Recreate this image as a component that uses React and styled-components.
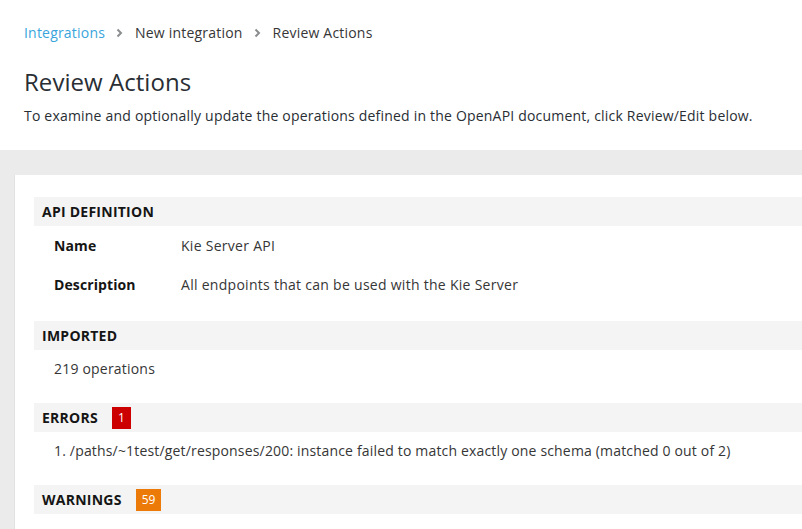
import React from 'react';
import styled, { createGlobalStyle } from 'styled-components';

const GlobalStyle = createGlobalStyle`
  html, body {
    margin: 0;
    padding: 0;
    background: #ebebeb;
    overflow: hidden;
  }
  body {
    font-family: "Open Sans", "Liberation Sans", sans-serif;
    font-size: 14px;
    letter-spacing: 0.2px;
    color: #363636;
  }
`;

const Page = styled.div`
  height: 529px;
  overflow: hidden;
  display: flex;
  flex-direction: column;
`;

const Header = styled.header`
  background: #fff;
  padding: 20px 24px 24px;
`;

const Breadcrumb = styled.nav`
  display: flex;
  align-items: center;
  line-height: 26px;
  font-size: 14px;
`;

const Crumb = styled.span`
  color: ${(p) => (p.link ? '#39a5dc' : '#363636')};
`;

const Sep = styled.span`
  display: inline-flex;
  align-items: center;
  margin: 0 12px 0 11px;
  color: #8b8d8f;
`;

const Title = styled.h1`
  margin: 21px 0 0;
  font-size: 24px;
  font-weight: 400;
  letter-spacing: 0.05px;
  line-height: 30px;
  color: #292e34;
`;

const Lead = styled.p`
  margin: 9px 0 0;
  line-height: 20px;
  color: #292e34;
`;

const Body = styled.main`
  flex: 1;
  background: #ebebeb;
  padding: 25px 0 0 14px;
`;

const Card = styled.div`
  background: #fff;
  border-left: 1px solid #e2e2e2;
  min-width: 820px;
  height: 100%;
  padding: 22px 0 0 19px;
`;

const SectionHead = styled.div`
  display: flex;
  align-items: center;
  height: 29px;
  padding: 0 8px;
  background: #f4f4f4;
  font-weight: 700;
  letter-spacing: 0.25px;
  text-transform: uppercase;
  color: #151515;
`;

const Badge = styled.span`
  display: inline-flex;
  align-items: center;
  justify-content: center;
  height: 22px;
  padding: 0 6px;
  margin-left: 14px;
  font-size: 12px;
  font-weight: 400;
  letter-spacing: 0;
  color: #fff;
  background: ${(p) => p.color};
`;

const SectionBody = styled.div`
  padding: ${(p) => p.pad || '9px 0 24px'} 20px;
  line-height: 20px;
`;

const Row = styled.div`
  display: grid;
  grid-template-columns: 127px 1fr;
  & + & {
    margin-top: 19px;
  }
`;

const Label = styled.span`
  font-weight: 700;
  letter-spacing: 0.1px;
  color: #151515;
`;

const Value = styled.span`
  letter-spacing: 0.28px;
`;

const List = styled.ol`
  margin: 0;
  padding: 0;
  list-style-position: inside;
  letter-spacing: 0.17px;
`;

const Chevron = () => (
  <svg width="7" height="10" viewBox="0 0 7 10">
    <path d="M1.5 1.5 L5 5 L1.5 8.5" fill="none" stroke="currentColor" strokeWidth="2" />
  </svg>
);

export default function App() {
  return (
    <Page>
      <GlobalStyle />
      <Header>
        <Breadcrumb>
          <Crumb link>Integrations</Crumb>
          <Sep><Chevron /></Sep>
          <Crumb>New integration</Crumb>
          <Sep><Chevron /></Sep>
          <Crumb>Review Actions</Crumb>
        </Breadcrumb>
        <Title>Review Actions</Title>
        <Lead>
          To examine and optionally update the operations defined in the OpenAPI document, click Review/Edit below.
        </Lead>
      </Header>
      <Body>
        <Card>
          <SectionHead>API Definition</SectionHead>
          <SectionBody pad="10px 0 26px">
            <Row>
              <Label>Name</Label>
              <Value>Kie Server API</Value>
            </Row>
            <Row>
              <Label>Description</Label>
              <Value>All endpoints that can be used with the Kie Server</Value>
            </Row>
          </SectionBody>

          <SectionHead>Imported</SectionHead>
          <SectionBody>219 operations</SectionBody>

          <SectionHead>
            Errors <Badge color="#cc0000">1</Badge>
          </SectionHead>
          <SectionBody>
            <List>
              <li>/paths/~1test/get/responses/200: instance failed to match exactly one schema (matched 0 out of 2)</li>
            </List>
          </SectionBody>

          <SectionHead>
            Warnings <Badge color="#ec7a08">59</Badge>
          </SectionHead>
        </Card>
      </Body>
    </Page>
  );
}
